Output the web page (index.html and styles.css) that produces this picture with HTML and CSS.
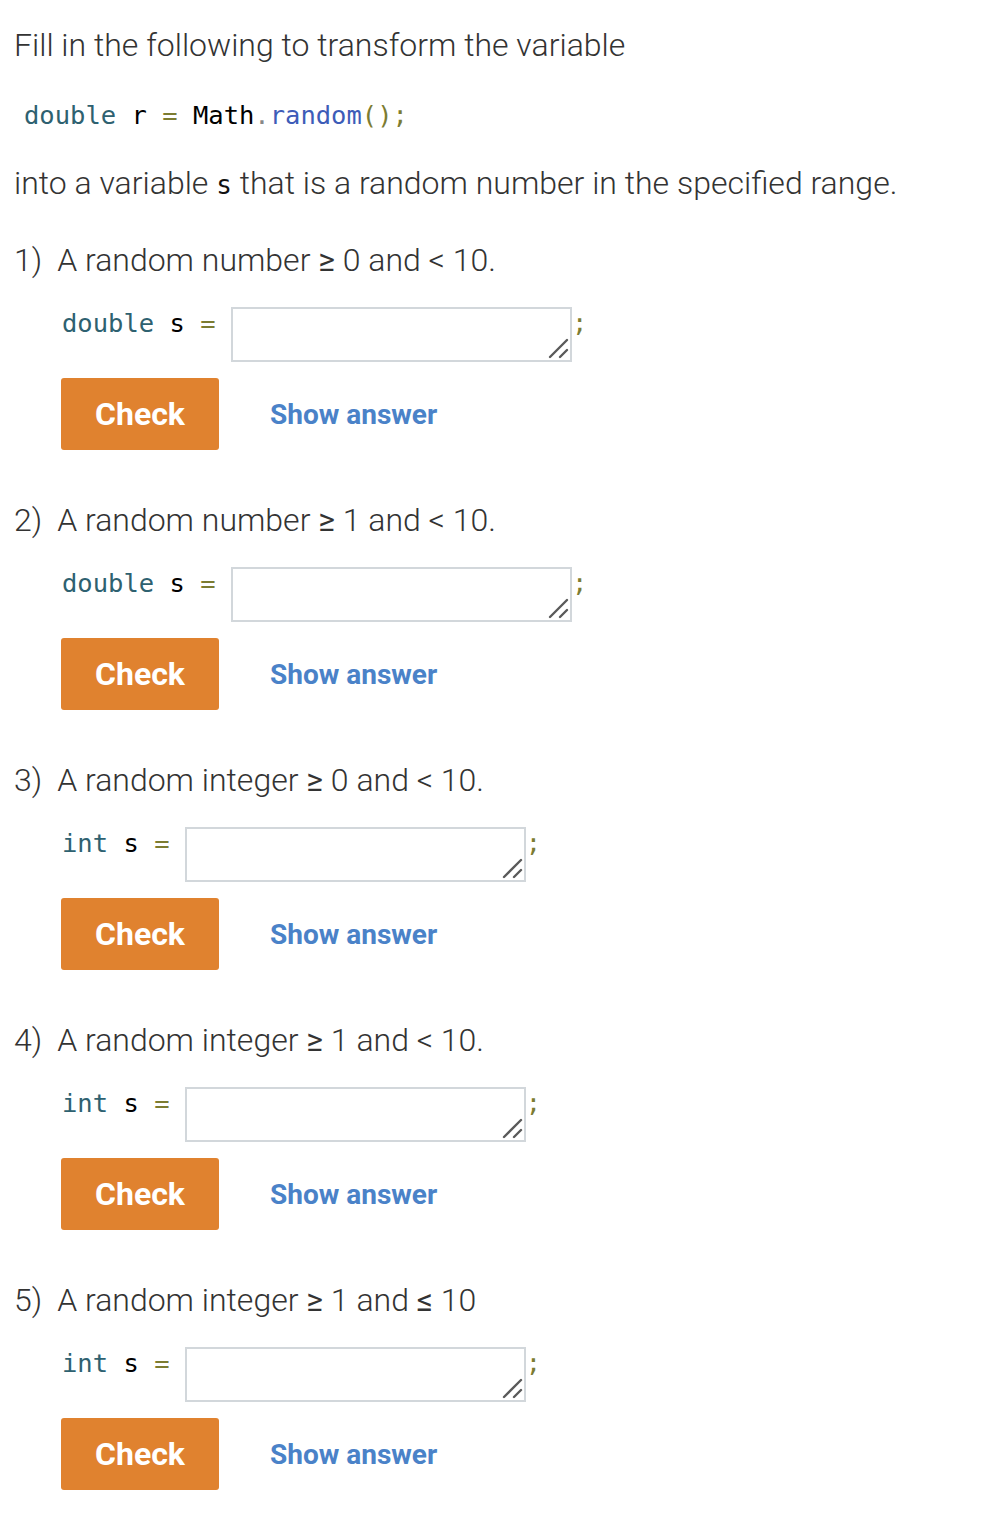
FILE: index.html
```html
<!DOCTYPE html>
<html>
<head>
<meta charset="utf-8">
<link rel="stylesheet" href="styles.css">
</head>
<body>
<div class="page">
  <p class="intro">Fill in the following to transform the variable</p>
  <div class="code-line"><span class="kw">double</span> <span class="id">r</span> <span class="op">=</span> <span class="id">Math</span><span class="dot">.</span><span class="fn">random</span><span class="op">();</span></div>
  <p class="intro">into a variable <span class="mono">s</span> that is a random number in the specified range.</p>

  <div class="questions">
  <div class="question">
    <div class="q-title"><span class="q-num">1)</span><span>A random number <span class="rel">≥</span> 0 and &lt; 10.</span></div>
    <div class="q-input"><span class="label"><span class="kw">double</span> <span class="id">s</span> <span class="op">=</span> </span><span class="field"><textarea class="answer"></textarea><svg class="grip" width="22" height="22" viewBox="0 0 22 22"><path d="M3 20 L20 3 M13 20 L20 13" /></svg></span><span class="semi">;</span></div>
    <div class="q-actions"><button class="check">Check</button><a class="show">Show answer</a></div>
  </div>

  <div class="question">
    <div class="q-title"><span class="q-num">2)</span><span>A random number <span class="rel">≥</span> 1 and &lt; 10.</span></div>
    <div class="q-input"><span class="label"><span class="kw">double</span> <span class="id">s</span> <span class="op">=</span> </span><span class="field"><textarea class="answer"></textarea><svg class="grip" width="22" height="22" viewBox="0 0 22 22"><path d="M3 20 L20 3 M13 20 L20 13" /></svg></span><span class="semi">;</span></div>
    <div class="q-actions"><button class="check">Check</button><a class="show">Show answer</a></div>
  </div>

  <div class="question">
    <div class="q-title"><span class="q-num">3)</span><span>A random integer <span class="rel">≥</span> 0 and &lt; 10.</span></div>
    <div class="q-input"><span class="label"><span class="kw">int</span> <span class="id">s</span> <span class="op">=</span> </span><span class="field"><textarea class="answer"></textarea><svg class="grip" width="22" height="22" viewBox="0 0 22 22"><path d="M3 20 L20 3 M13 20 L20 13" /></svg></span><span class="semi">;</span></div>
    <div class="q-actions"><button class="check">Check</button><a class="show">Show answer</a></div>
  </div>

  <div class="question">
    <div class="q-title"><span class="q-num">4)</span><span>A random integer <span class="rel">≥</span> 1 and &lt; 10.</span></div>
    <div class="q-input"><span class="label"><span class="kw">int</span> <span class="id">s</span> <span class="op">=</span> </span><span class="field"><textarea class="answer"></textarea><svg class="grip" width="22" height="22" viewBox="0 0 22 22"><path d="M3 20 L20 3 M13 20 L20 13" /></svg></span><span class="semi">;</span></div>
    <div class="q-actions"><button class="check">Check</button><a class="show">Show answer</a></div>
  </div>

  <div class="question">
    <div class="q-title"><span class="q-num">5)</span><span>A random integer <span class="rel">≥</span> 1 and <span class="rel">≤</span> 10</span></div>
    <div class="q-input"><span class="label"><span class="kw">int</span> <span class="id">s</span> <span class="op">=</span> </span><span class="field"><textarea class="answer"></textarea><svg class="grip" width="22" height="22" viewBox="0 0 22 22"><path d="M3 20 L20 3 M13 20 L20 13" /></svg></span><span class="semi">;</span></div>
    <div class="q-actions"><button class="check">Check</button><a class="show">Show answer</a></div>
  </div>
  </div>
</div>
</body>
</html>
```
FILE: styles.css
```css
body {
  margin: 0;
  background: #ffffff;
  font-family: Roboto, "Noto Sans", sans-serif;
  font-weight: 300;
  color: #333333;
}
.page {
  padding: 22px 14px 0 14px;
}
.intro {
  margin: 0;
  font-size: 32px;
  line-height: 46px;
}
.code-line {
  font-family: "DejaVu Sans Mono", monospace;
  font-size: 25.5px;
  line-height: 30px;
  margin: 32px 0 30px 10px;
  font-weight: 400;
  white-space: pre;
}
.mono {
  font-family: "DejaVu Sans Mono", monospace;
  font-weight: 400;
  color: #111;
  font-size: 26px;
}
.kw { color: #2e6170; }
.id { color: #000000; }
.op { color: #7c7c32; }
.dot { color: #888888; }
.fn { color: #3d5cb8; }
.questions {
  display: flex;
  flex-direction: column;
  gap: 48px;
  padding-top: 30px;
}
.q-title {
  display: flex;
  gap: 15px;
  font-size: 32px;
  line-height: 44px;
}
.rel {
  font-weight: 400;
}
.q-input {
  display: flex;
  align-items: flex-start;
  margin: 25px 0 0 48px;
  font-family: "DejaVu Sans Mono", monospace;
  font-weight: 400;
  font-size: 25.5px;
  line-height: 32px;
}
.label {
  white-space: pre;
}
.field {
  position: relative;
  display: block;
  width: 341px;
  height: 55px;
}
.answer {
  display: block;
  width: 341px;
  height: 55px;
  box-sizing: border-box;
  border: 2px solid #d2d7db;
  border-radius: 0;
  margin: 0;
  padding: 4px;
  resize: none;
  font-size: 20px;
  background: #ffffff;
}
.grip {
  position: absolute;
  right: 3px;
  bottom: 3px;
  fill: none;
  stroke: #5a5a5a;
  stroke-width: 2.4;
  stroke-linecap: round;
}
.semi {
  color: #7c7c32;
  margin-left: 0;
}
.q-actions {
  display: flex;
  align-items: center;
  gap: 51px;
  margin: 16px 0 0 47px;
}
.check {
  width: 158px;
  height: 72px;
  padding: 0;
  background: #e0822f;
  border: none;
  border-radius: 3px;
  color: #ffffff;
  font-family: Roboto, sans-serif;
  font-weight: 700;
  font-size: 32px;
}
.show {
  color: #4a82c8;
  font-family: Roboto, sans-serif;
  font-weight: 700;
  font-size: 28px;
}
```
